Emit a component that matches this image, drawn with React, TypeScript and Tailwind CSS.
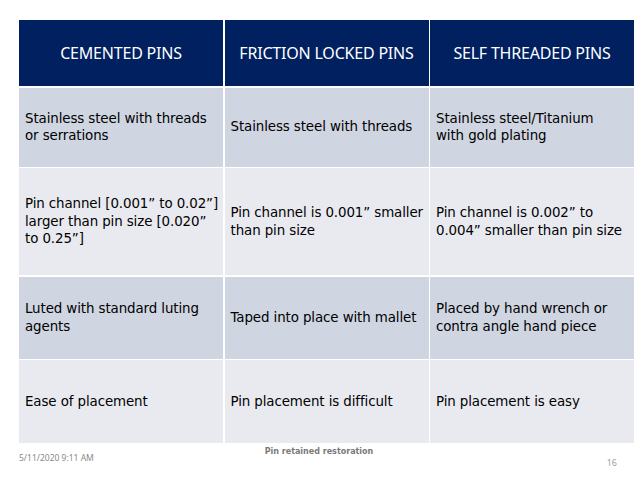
import React from "react";

const header = ["CEMENTED PINS", "FRICTION LOCKED PINS", "SELF THREADED PINS"];

// each cell is a list of lines, broken where the slide breaks them
const rows: string[][][] = [
  [
    ["Stainless steel with threads", "or serrations"],
    ["Stainless steel with threads"],
    ["Stainless steel/Titanium", "with gold plating"],
  ],
  [
    ["Pin channel [0.001\u201d to 0.02\u201d]", "larger than pin size [0.020\u201d", "to 0.25\u201d]"],
    ["Pin channel is 0.001\u201d smaller", "than pin size"],
    ["Pin channel is 0.002\u201d to", "0.004\u201d smaller than pin size"],
  ],
  [
    ["Luted with standard luting", "agents"],
    ["Taped into place with mallet"],
    ["Placed by hand wrench or", "contra angle hand piece"],
  ],
  [
    ["Ease of placement"],
    ["Pin placement is difficult"],
    ["Pin placement is easy"],
  ],
];

export default function App(): React.ReactElement {
  return (
    <div className="w-[638px] h-[478px] overflow-hidden flex flex-col bg-[linear-gradient(#ebebeb,#ebebeb)_top/100%_95px_no-repeat,linear-gradient(to_bottom_right,#ffffff_15%,#c0ecc0)]">
      <div className="ml-[19px] mt-[20px] w-[614px] grid grid-cols-[204px_204px_204px] grid-rows-[66px_79px_107px_82px_83px] gap-[1.5px] bg-white border-r-[1.5px] border-white">
        {header.map((h) => (
          <div
            key={h}
            className="bg-[#002060] flex items-center justify-center text-white text-[16px] font-['Noto_Sans',sans-serif] tracking-[-0.2px]"
          >
            {h}
          </div>
        ))}
        {rows.map((row, i) =>
          row.map((lines, j) => (
            <div
              key={`${i}-${j}`}
              className={`${i % 2 === 0 ? "bg-[#cfd5e1]" : "bg-[#e9eaf0]"} flex flex-col justify-center px-[6px] text-[13.4px] leading-[17.5px] text-black whitespace-nowrap overflow-hidden tracking-[-0.1px] font-['DejaVu_Sans',sans-serif]`}
            >
              {lines.map((l) => (
                <span key={l}>{l}</span>
              ))}
            </div>
          ))
        )}
      </div>

      {/* footer */}
      <div className="grid grid-cols-3 px-[19px] flex-1">
        <div className="pt-[9px] text-[8.5px] text-[#8a8a8a] font-['Noto_Sans',sans-serif]">
          5/11/2020 9:11 AM
        </div>
        <div className="pt-[3px] text-center text-[8px] font-bold text-[#7a7a7a] font-['DejaVu_Sans',sans-serif]">
          Pin retained restoration
        </div>
        <div className="pt-[13px] pr-[2px] text-right text-[9px] text-[#a0a0a0] font-['Noto_Sans',sans-serif]">
          16
        </div>
      </div>
    </div>
  );
}
